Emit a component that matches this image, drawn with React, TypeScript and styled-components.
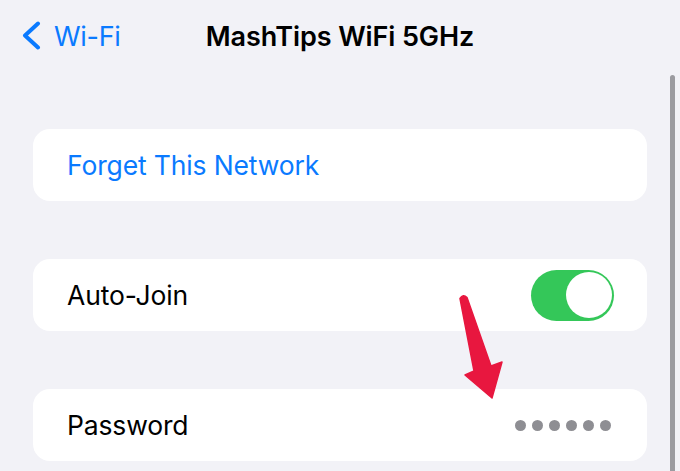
import styled, { createGlobalStyle } from "styled-components"

const GlobalStyle = createGlobalStyle`
  html, body {
    margin: 0;
    padding: 0;
    background: #f2f2f7;
  }
  body {
    font-family: Inter, "Noto Sans", "Liberation Sans", sans-serif;
    -webkit-font-smoothing: antialiased;
  }
`

const Screen = styled.div`
  position: relative;
  width: 680px;
  height: 471px;
  overflow: hidden;
  background: #f2f2f7;
`

const NavBar = styled.div`
  display: grid;
  grid-template-columns: 1fr auto 1fr;
  align-items: center;
  box-sizing: border-box;
  height: 48px;
  padding-top: 21px;
  line-height: 27px;
`

const BackButton = styled.div`
  display: flex;
  align-items: center;
  gap: 12px;
  padding-left: 22px;
  color: #0a7aff;
  font-size: 27px;
  font-weight: 400;
  letter-spacing: -0.3px;
`

const Title = styled.div`
  color: #000;
  font-size: 27px;
  font-weight: 600;
  letter-spacing: -0.1px;
`

const List = styled.div`
  display: flex;
  flex-direction: column;
  gap: 58px;
  margin-top: 81px;
  padding: 0 33px;
`

const Cell = styled.div`
  display: flex;
  align-items: center;
  justify-content: space-between;
  box-sizing: border-box;
  height: 72px;
  padding: 0 33px 0 34px;
  background: #fff;
  border-radius: 17px;
`

const Label = styled.span<{ $tint?: boolean }>`
  color: ${(p) => (p.$tint ? "#0a7aff" : "#000")};
  font-size: 26.5px;
  letter-spacing: -0.15px;
`

const Toggle = styled.div`
  display: flex;
  justify-content: flex-end;
  align-items: center;
  box-sizing: border-box;
  width: 83px;
  height: 51px;
  padding: 2.5px;
  border-radius: 26px;
  background: #34c759;
`

const Knob = styled.div`
  width: 46px;
  height: 46px;
  border-radius: 50%;
  background: #fff;
`

const Dots = styled.div`
  display: flex;
  gap: 6px;
  margin-right: 3px;
`

const Dot = styled.span`
  width: 11px;
  height: 11px;
  border-radius: 50%;
  background: #8e8e93;
`

const ScrollIndicator = styled.div`
  position: absolute;
  left: 670px;
  top: 75px;
  bottom: 0;
  width: 5px;
  border-radius: 3px 3px 0 0;
  background: #9b9ba0;
`

const Pointer = styled.svg`
  position: absolute;
  left: 0;
  top: 0;
  pointer-events: none;
`

function App() {
  return (
    <Screen>
      <GlobalStyle />
      <NavBar>
        <BackButton>
          <svg width="20" height="30" viewBox="0 0 20 30">
            <polyline
              points="16,2.5 3,14.5 16,26.5"
              fill="none"
              stroke="#0a7aff"
              strokeWidth="4"
              strokeLinecap="round"
              strokeLinejoin="round"
            />
          </svg>
          Wi-Fi
        </BackButton>
        <Title>MashTips WiFi 5GHz</Title>
        <div />
      </NavBar>

      <List>
        <Cell>
          <Label $tint>Forget This Network</Label>
        </Cell>
        <Cell>
          <Label>Auto-Join</Label>
          <Toggle>
            <Knob />
          </Toggle>
        </Cell>
        <Cell>
          <Label>Password</Label>
          <Dots>
            {[0, 1, 2, 3, 4, 5].map((i) => (
              <Dot key={i} />
            ))}
          </Dots>
        </Cell>
      </List>

      <ScrollIndicator />

      <Pointer width="680" height="471" viewBox="0 0 680 471">
        <path
          d="M460 298.5 Q463 293.5 467 297.5 L491 366 L502 362 L492 398 L465 375 L474 371 Z"
          fill="#e8173f"
          stroke="#e8173f"
          strokeWidth="1.5"
          strokeLinejoin="round"
        />
      </Pointer>
    </Screen>
  )
}

export default App
